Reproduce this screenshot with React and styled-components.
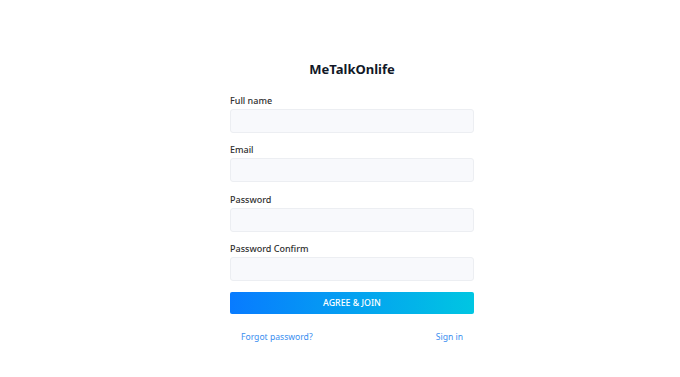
import React from 'react';
import styled, { createGlobalStyle } from 'styled-components';

const GlobalStyle = createGlobalStyle`
  html, body {
    margin: 0;
    padding: 0;
    background: #ffffff;
    font-family: "Noto Sans", "Open Sans", sans-serif;
  }
`;

const Page = styled.div`
  width: 100%;
  min-height: 377px;
  display: flex;
  justify-content: center;
  padding: 59px 0 0 24px;
  box-sizing: border-box;
`;

const Form = styled.form`
  width: 244px;
  display: flex;
  flex-direction: column;
`;

const Title = styled.h1`
  margin: 0 0 16px;
  font-size: 13px;
  line-height: 20px;
  font-weight: 700;
  color: #111827;
  text-align: center;
`;

const Field = styled.div`
  display: flex;
  flex-direction: column;
  margin-bottom: 11.4px;
`;

const Label = styled.label`
  font-size: 9px;
  line-height: 12px;
  font-weight: 500;
  color: #2f2f2f;
  margin-bottom: 2px;
`;

const Input = styled.input`
  height: 24px;
  box-sizing: border-box;
  border: 1px solid #eceef2;
  border-radius: 3px;
  background: #f8f9fc;
  padding: 0 8px;
  font-size: 10px;
  outline: none;
`;

const Button = styled.button`
  margin-top: -1px;
  height: 22px;
  border: none;
  border-radius: 2px;
  background: linear-gradient(90deg, #087bff 0%, #00c6e2 100%);
  color: #ffffff;
  font-family: inherit;
  font-size: 8.8px;
  font-weight: 500;
  text-transform: uppercase;
  cursor: pointer;
`;

const Links = styled.div`
  display: flex;
  justify-content: space-between;
  padding: 0 11px;
  margin-top: 17px;
`;

const Link = styled.a`
  font-size: 8.6px;
  line-height: 12px;
  color: #3a8ef0;
  text-decoration: none;
`;

const fields = [
  { label: 'Full name', type: 'text' },
  { label: 'Email', type: 'email' },
  { label: 'Password', type: 'password' },
  { label: 'Password Confirm', type: 'password' },
];

const App = () => {
  return (
    <>
      <GlobalStyle />
      <Page>
        <Form onSubmit={(e) => e.preventDefault()}>
          <Title>MeTalkOnlife</Title>
          {fields.map((f) => (
            <Field key={f.label}>
              <Label>{f.label}</Label>
              <Input type={f.type} />
            </Field>
          ))}
          <Button type="submit">Agree &amp; Join</Button>
          <Links>
            <Link href="#">Forgot password?</Link>
            <Link href="#">Sign in</Link>
          </Links>
        </Form>
      </Page>
    </>
  );
};

export default App;
